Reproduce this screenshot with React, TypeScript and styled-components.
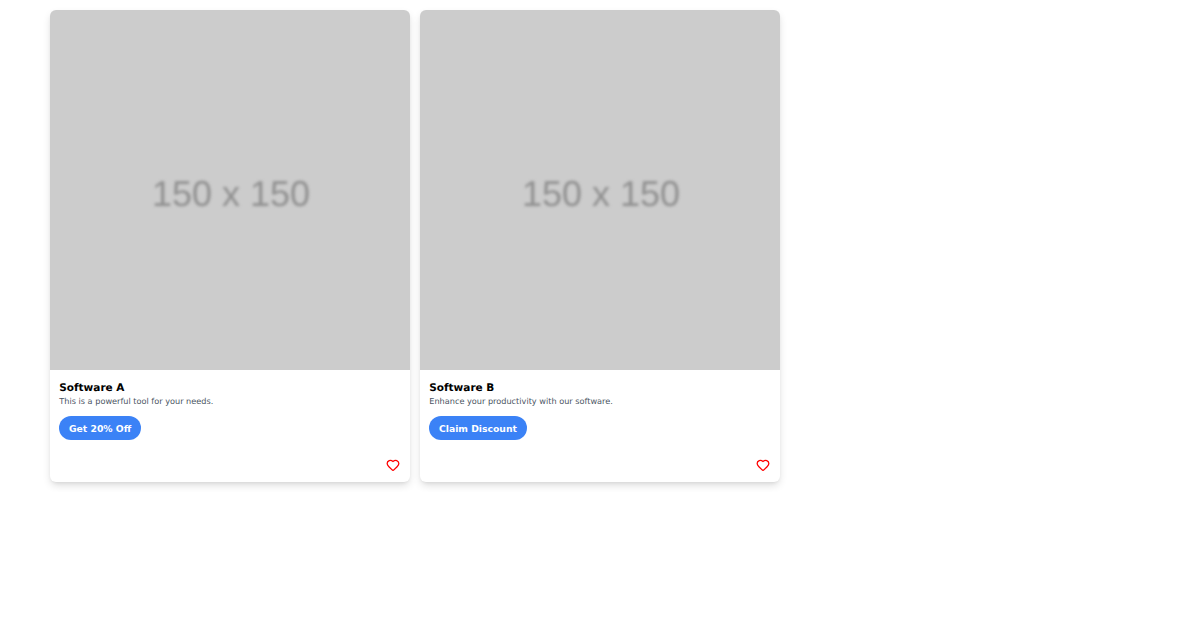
import React from "react";
import styled, { createGlobalStyle } from "styled-components";
import { Heart } from "lucide-react";

const GlobalStyle = createGlobalStyle`
  html, body {
    margin: 0;
    padding: 0;
    background: #fff;
    font-family: "DejaVu Sans", sans-serif;
    text-rendering: geometricPrecision;
  }
`;

const Grid = styled.div`
  display: flex;
  gap: 10px;
  padding: 10px 50px;
`;

const Card = styled.div`
  width: 360px;
  height: 472px;
  display: flex;
  flex-direction: column;
  border-radius: 6px;
  overflow: hidden;
  background: #fff;
  box-shadow: 0 4px 9px -1px rgba(0, 0, 0, 0.14), 0 2px 4px -2px rgba(0, 0, 0, 0.1);
`;

const Placeholder = styled.div`
  width: 360px;
  height: 360px;
  background: #cccccc;
  display: flex;
  align-items: center;
  justify-content: center;
`;

const PlaceholderText = styled.span`
  font-family: "Liberation Sans", Arial, sans-serif;
  font-size: 36px;
  color: #8f8f8f;
  filter: blur(1.4px);
  transform: translate(1px, 4px);
`;

const Body = styled.div`
  flex: 1;
  display: flex;
  flex-direction: column;
  align-items: flex-start;
  padding: 11px 10px 10px 9.25px;
`;

const Title = styled.h2`
  margin: 0;
  font-size: 10.5px;
  line-height: 15px;
  font-weight: 700;
  color: #000;
`;

const Description = styled.p`
  margin: 0 0 9px;
  font-size: 8.16px;
  line-height: 11px;
  color: #4b5563;
`;

const Action = styled.button`
  height: 24px;
  padding: 0 9.75px;
  border: none;
  border-radius: 12px;
  background: #3b82f6;
  color: #fff;
  font-family: inherit;
  font-size: 9.24px;
  font-weight: 700;
`;

const Footer = styled.div`
  margin-top: auto;
  align-self: flex-end;
  display: flex;
  color: #ff0000;
`;

const products = [
  { name: "Software A", text: "This is a powerful tool for your needs.", action: "Get 20% Off" },
  { name: "Software B", text: "Enhance your productivity with our software.", action: "Claim Discount" },
];

export default function App() {
  return (
    <>
      <GlobalStyle />
      <Grid>
        {products.map((product) => (
          <Card key={product.name}>
            <Placeholder>
              <PlaceholderText>150 x 150</PlaceholderText>
            </Placeholder>
            <Body>
              <Title>{product.name}</Title>
              <Description>{product.text}</Description>
              <Action>{product.action}</Action>
              <Footer>
                <Heart size={14} strokeWidth={2.2} />
              </Footer>
            </Body>
          </Card>
        ))}
      </Grid>
    </>
  );
}
